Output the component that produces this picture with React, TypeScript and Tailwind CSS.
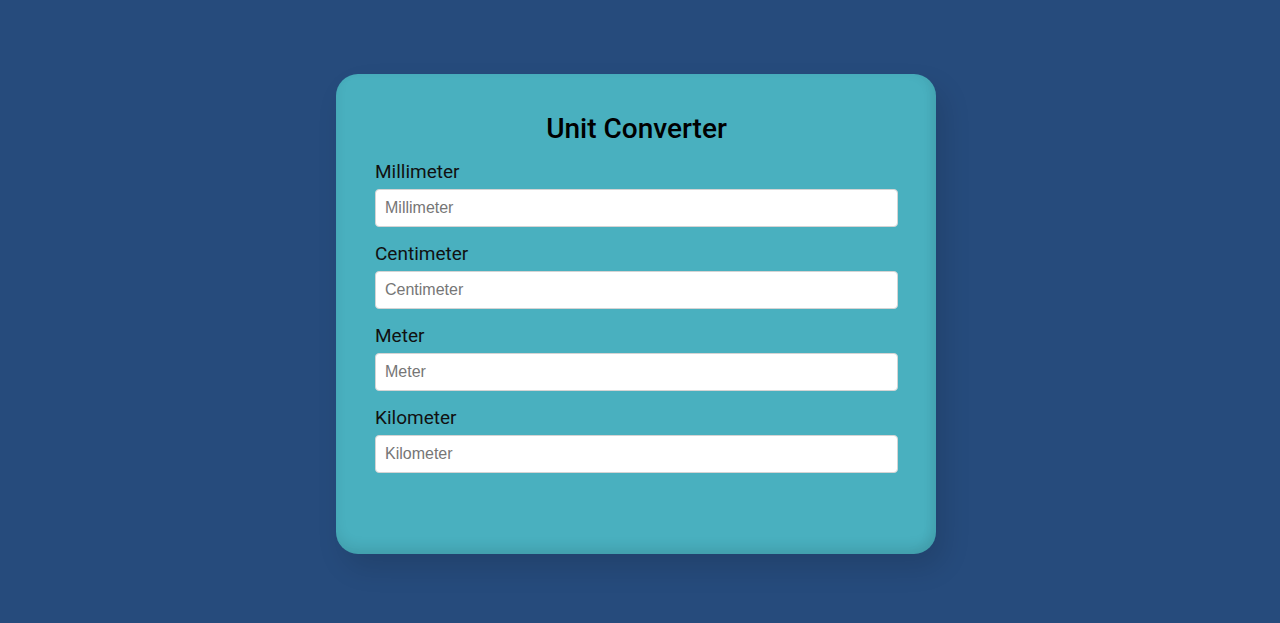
const units = ['Millimeter', 'Centimeter', 'Meter', 'Kilometer'];

export default function App() {
  return (
    <div className="min-h-screen w-full bg-[#264b7c] flex items-center justify-center pr-[8px] pt-[4px] font-['Roboto',sans-serif]">
      <div className="w-[600px] h-[480px] rounded-[22px] bg-[#49b0bf] pl-[39px] pr-[38px] pt-[38px] shadow-[inset_0_-8px_12px_rgba(0,0,0,0.08),inset_-6px_0_10px_rgba(0,0,0,0.04),8px_14px_28px_rgba(0,0,0,0.12)]">
        <h1 className="text-center text-[28px] font-medium leading-[34px] text-black mb-[15px]">Unit Converter</h1>
        {units.map((u) => (
          <div key={u} className="mb-[16px]">
            <label className="block text-[19px] leading-[22px] text-[#111] mb-[6px]">{u}</label>
            <input
              type="text"
              placeholder={u}
              className="block w-full h-[38px] rounded-[4px] border border-[#d4d4d4] bg-white px-[9px] text-[16px] font-['Liberation_Sans',Arial,sans-serif] placeholder:text-[#767676] outline-none"
            />
          </div>
        ))}
      </div>
    </div>
  );
}
